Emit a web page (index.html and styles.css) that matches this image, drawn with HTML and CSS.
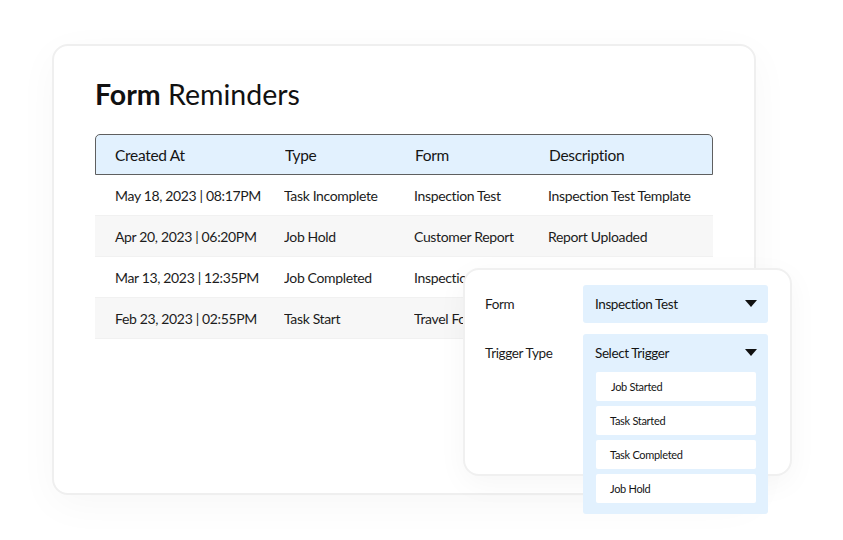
FILE: index.html
```html
<!DOCTYPE html>
<html lang="en">
<head>
<meta charset="utf-8">
<title>Form Reminders</title>
<link rel="stylesheet" href="styles.css">
</head>
<body>
<div class="stage">
  <div class="card">
    <h1 class="title"><b>Form</b> Reminders</h1>
    <div class="table">
      <div class="row head">
        <div class="c c1">Created At</div>
        <div class="c c2">Type</div>
        <div class="c c3">Form</div>
        <div class="c c4">Description</div>
      </div>
      <div class="row">
        <div class="c c1">May 18, 2023 | 08:17PM</div>
        <div class="c c2">Task Incomplete</div>
        <div class="c c3">Inspection Test</div>
        <div class="c c4">Inspection Test Template</div>
      </div>
      <div class="row alt">
        <div class="c c1">Apr 20, 2023 | 06:20PM</div>
        <div class="c c2">Job Hold</div>
        <div class="c c3">Customer Report</div>
        <div class="c c4">Report Uploaded</div>
      </div>
      <div class="row">
        <div class="c c1">Mar 13, 2023 | 12:35PM</div>
        <div class="c c2">Job Completed</div>
        <div class="c c3">Inspection Test</div>
        <div class="c c4">Checklist Done</div>
      </div>
      <div class="row alt">
        <div class="c c1">Feb 23, 2023 | 02:55PM</div>
        <div class="c c2">Task Start</div>
        <div class="c c3">Travel Form</div>
        <div class="c c4">Travel Logged</div>
      </div>
    </div>
  </div>

  <div class="panel">
    <div class="field">
      <div class="label">Form</div>
      <div class="select">
        <div class="select-head"><span>Inspection Test</span><svg class="caret" width="12" height="8" viewBox="0 0 12 8"><path d="M0 0H12L6 7Z" fill="#111"/></svg></div>
      </div>
    </div>
    <div class="field">
      <div class="label">Trigger Type</div>
      <div class="select open">
        <div class="select-head"><span>Select Trigger</span><svg class="caret" width="12" height="8" viewBox="0 0 12 8"><path d="M0 0H12L6 7Z" fill="#111"/></svg></div>
        <div class="options">
          <div class="opt first">Job Started</div>
          <div class="opt">Task Started</div>
          <div class="opt">Task Completed</div>
          <div class="opt">Job Hold</div>
        </div>
      </div>
    </div>
  </div>
</div>
</body>
</html>
```

FILE: styles.css
```css
* { box-sizing: border-box; }
html, body { margin: 0; padding: 0; background: #fff; }
body {
  font-family: "Lato", "Noto Sans", sans-serif;
  color: #1a1a1a;
  width: 843px;
  height: 540px;
  overflow: hidden;
}
.stage {
  position: relative;
  width: 843px;
  height: 540px;
  padding: 44px 0 0 52px;
}
.card {
  width: 704px;
  height: 451px;
  border: 2px solid #efefef;
  border-radius: 16px;
  background: #fff;
  box-shadow: 0 10px 40px rgba(0,0,0,0.035);
  padding: 28px 41px 0 41px;
}
.title {
  margin: 0 0 20px 0;
  font-size: 28.5px;
  line-height: 40px;
  font-weight: 400;
  color: #111;
}
.title b { font-weight: 700; }
.table {
  width: 618px;
}
.row {
  display: flex;
  height: 41px;
  align-items: center;
  font-size: 14px;
  letter-spacing: -0.35px;
  background: #fff;
  border-bottom: 1px solid #f1f1f1;
  color: #1c1c1c;
}
.row.alt { background: #f7f7f7; }
.row.head {
  background: #e2f1fe;
  border: 1px solid #5f5f5f;
  border-radius: 5px 5px 0 0;
  font-size: 15.5px;
  letter-spacing: -0.3px;
  color: #151515;
}
.c { white-space: nowrap; overflow: hidden; }
.c1 { width: 189px; padding-left: 20px; }
.c2 { width: 130px; }
.c3 { width: 134px; }
.c4 { flex: 1; }
.row.head .c1 { padding-left: 19px; }

.panel {
  position: absolute;
  left: 463px;
  top: 268px;
  width: 329px;
  height: 208px;
  background: #fff;
  border: 2px solid #f0f0f0;
  border-radius: 16px;
  box-shadow: 0 8px 30px rgba(0,0,0,0.04);
  padding: 15px 0 0 20px;
}
.field {
  display: flex;
  align-items: flex-start;
  margin-bottom: 11px;
}
.label {
  width: 98px;
  font-size: 13.5px;
  letter-spacing: -0.35px;
  line-height: 38px;
  color: #1c1c1c;
}
.select {
  width: 185px;
  background: #e2f1fe;
  border-radius: 3px;
}
.select-head {
  height: 38px;
  display: flex;
  align-items: center;
  justify-content: space-between;
  padding: 0 11px 0 12px;
  font-size: 13.5px;
  letter-spacing: -0.4px;
  color: #151515;
}
.caret { display: block; }
.options {
  padding: 0 12px 11px 13px;
  display: flex;
  flex-direction: column;
  gap: 5px;
}
.opt {
  height: 29px;
  background: #fff;
  border-radius: 2px;
  font-size: 11px;
  letter-spacing: -0.3px;
  line-height: 29px;
  padding-left: 14px;
  color: #151515;
}
.opt.first { padding-left: 15px; }
```
